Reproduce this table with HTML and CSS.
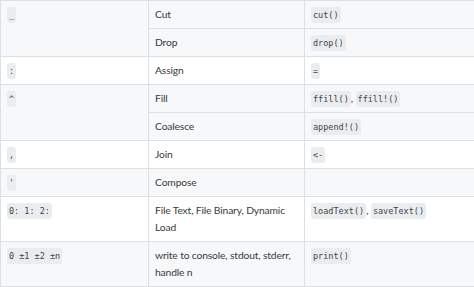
FILE: index.html
```html
<!DOCTYPE html>
<html>
<head>
<meta charset="utf-8">
<link rel="stylesheet" href="styles.css">
</head>
<body>
<table class="ops">
  <colgroup><col class="c1"><col class="c2"><col class="c3"></colgroup>
  <tbody>
    <tr class="alt"><td rowspan="2"><code>_</code></td><td>Cut</td><td><code>cut()</code></td></tr>
    <tr class="alt"><td>Drop</td><td><code>drop()</code></td></tr>
    <tr><td><code>:</code></td><td>Assign</td><td><code>=</code></td></tr>
    <tr class="alt"><td rowspan="2"><code>^</code></td><td>Fill</td><td><code>ffill()</code>, <code>ffill!()</code></td></tr>
    <tr class="alt"><td>Coalesce</td><td><code>append!()</code></td></tr>
    <tr><td><code>,</code></td><td>Join</td><td><code>&lt;-</code></td></tr>
    <tr class="alt"><td><code>'</code></td><td>Compose</td><td></td></tr>
    <tr><td><code>0: 1: 2:</code></td><td>File Text, File Binary, Dynamic Load</td><td><code>loadText()</code>, <code>saveText()</code></td></tr>
    <tr class="alt"><td><code>0 ±1 ±2 ±n</code></td><td>write to console, stdout, stderr, handle n</td><td><code>print()</code></td></tr>
  </tbody>
</table>
</body>
</html>
```
FILE: styles.css
```css
html, body {
  margin: 0;
  padding: 0;
  background: #ffffff;
}
.ops {
  border-collapse: collapse;
  table-layout: fixed;
  width: 478px;
  font-family: Lato, "Noto Sans", sans-serif;
  font-size: 10.3px;
  letter-spacing: -0.15px;
  line-height: 17px;
  color: #3a3a3a;
}
.c1 { width: 148px; }
.c2 { width: 156px; }
.c3 { width: 174px; }
.ops td {
  border: 1px solid #dcdfe3;
  padding: 5px 6px 5px 6px;
  vertical-align: top;
  text-align: left;
}
.ops tr.alt td { background: #f6f8fa; }
.ops code {
  font-family: "DejaVu Sans Mono", monospace;
  font-size: 8.5px;
  letter-spacing: 0;
  line-height: 1;
  background: #eaedf0;
  color: #444;
  padding: 3px 2px;
  border-radius: 3px;
}
```
